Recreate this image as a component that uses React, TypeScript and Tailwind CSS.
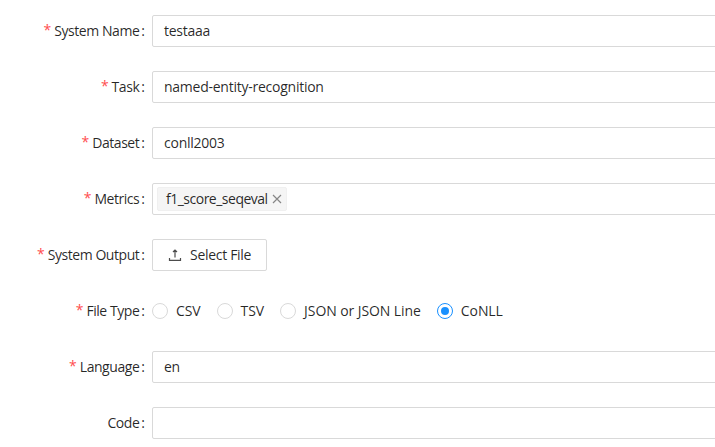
import { type ReactNode } from "react";

const FONT = "font-['Open_Sans','Noto_Sans',sans-serif]";

function FormRow({ label, required = true, children }: { label: string; required?: boolean; children: ReactNode }) {
  return (
    <div className="flex h-8 items-center">
      <label className="flex w-[152px] shrink-0 items-center justify-end pb-[2px] text-[14px] text-[#000000d9]">
        {required && <span className="mr-[3px] text-[14px] leading-none text-[#ff4d4f]">*</span>}
        <span className="tracking-[-0.45px]">{label}</span>
        <span className="ml-[2px] mr-[7px]">:</span>
      </label>
      <div className="flex min-w-0 flex-1 items-center">{children}</div>
    </div>
  );
}

function TextBox({ value }: { value?: string }) {
  return (
    <div className="flex h-8 w-[600px] shrink-0 items-center rounded-[2px] border border-[#d9d9d9] bg-white px-[11px] pb-[2px] text-[14px] text-[#000000d9] tracking-[-0.25px]">
      {value}
    </div>
  );
}

function Radio({ label, checked = false }: { label: string; checked?: boolean }) {
  return (
    <div className="mr-2 flex items-center">
      <span
        className={`flex h-4 w-4 items-center justify-center rounded-full border bg-white ${
          checked ? "border-[#1890ff]" : "border-[#d9d9d9]"
        }`}
      >
        {checked && <span className="h-2 w-2 rounded-full bg-[#1890ff]" />}
      </span>
      <span className="px-2 pb-[2px] text-[14px] text-[#000000d9] tracking-[-0.08px]">{label}</span>
    </div>
  );
}

export default function App() {
  return (
    <div className={`${FONT} h-screen w-full overflow-hidden bg-white pt-[15px]`}>
      <div className="flex flex-col gap-6">
        <FormRow label="System Name">
          <TextBox value="testaaa" />
        </FormRow>
        <FormRow label="Task">
          <TextBox value="named-entity-recognition" />
        </FormRow>
        <FormRow label="Dataset">
          <TextBox value="conll2003" />
        </FormRow>
        <FormRow label="Metrics">
          <div className="flex h-8 w-[600px] shrink-0 items-center rounded-[2px] border border-[#d9d9d9] bg-white px-1">
            <span className="flex h-6 items-center rounded-[2px] border border-[#f0f0f0] bg-[#f5f5f5] pb-[2px] pl-2 pr-1 text-[14px] text-[#000000d9] tracking-[-0.5px]">
              f1_score_seqeval
              <svg viewBox="0 0 10 10" className="ml-1 mt-[2px] h-[10px] w-[10px]" fill="none" stroke="#00000073" strokeWidth="1.2">
                <path d="M1 1l8 8M9 1l-8 8" />
              </svg>
            </span>
          </div>
        </FormRow>
        <FormRow label="System Output">
          <button className="flex h-8 items-center rounded-[2px] border border-[#d9d9d9] bg-white px-[15px] pb-[2px] text-[14px] text-[#000000d9] tracking-[-0.3px]">
            <svg viewBox="0 0 14 14" className="mr-2 mt-[2px] h-[14px] w-[14px]" fill="none" stroke="#000000b3" strokeWidth="1.2">
              <path d="M7 9.5V2M5 4l2-2 2 2M1.5 10v2.4h11V10" />
            </svg>
            Select File
          </button>
        </FormRow>
        <FormRow label="File Type">
          <Radio label="CSV" />
          <Radio label="TSV" />
          <Radio label="JSON or JSON Line" />
          <Radio label="CoNLL" checked />
        </FormRow>
        <FormRow label="Language">
          <TextBox value="en" />
        </FormRow>
        <FormRow label="Code" required={false}>
          <TextBox />
        </FormRow>
      </div>
    </div>
  );
}
